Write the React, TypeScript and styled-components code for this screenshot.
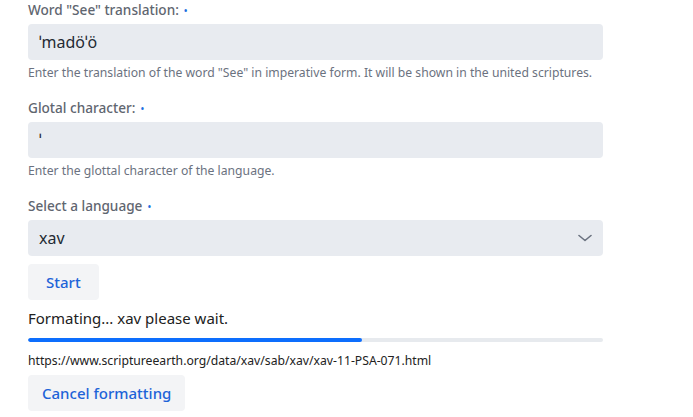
import styled, { createGlobalStyle } from "styled-components";

const GlobalStyle = createGlobalStyle`
  html, body {
    margin: 0;
    padding: 0;
    background: #ffffff;
  }
  body {
    font-family: "Noto Sans", "Open Sans", sans-serif;
    color: #1f2937;
  }
`;

const Page = styled.div`
  width: 575px;
  padding-left: 28px;
  display: flex;
  flex-direction: column;
`;

const Field = styled.div<{ $last?: boolean }>`
  display: flex;
  flex-direction: column;
  margin-bottom: ${(p) => (p.$last ? 8 : 16)}px;
`;

const Label = styled.label`
  height: 20px;
  line-height: 20px;
  font-size: 13.6px;
  font-weight: 500;
  color: #5f6670;
  margin-bottom: 4px;
`;

const Required = styled.span`
  color: #1a6fe0;
  font-size: 10px;
  margin-left: 5px;
`;

const TextInput = styled.div`
  height: 36px;
  box-sizing: border-box;
  background: #e8ebf0;
  border-radius: 4px;
  padding: 0 11px;
  display: flex;
  align-items: center;
  font-size: 16px;
  color: #232a33;
`;

const SelectBox = styled(TextInput)`
  justify-content: space-between;
  padding-right: 11px;
`;

const Help = styled.div`
  margin-top: 4px;
  height: 18px;
  line-height: 18px;
  font-size: 12.2px;
  color: #6b7280;
`;

const Button = styled.button<{ $pad?: number }>`
  align-self: flex-start;
  height: 36px;
  padding: 0 ${(p) => p.$pad ?? 14}px;
  border: none;
  border-radius: 4px;
  background: #f3f4f6;
  color: #1d63d8;
  font-family: inherit;
  font-size: 15px;
  font-weight: 500;
`;

const Status = styled.div`
  margin-top: 6px;
  height: 24px;
  line-height: 24px;
  font-size: 15px;
  color: #212121;
`;

const Track = styled.div`
  margin-top: 8px;
  height: 4px;
  border-radius: 2px;
  background: #e7eaee;
  overflow: hidden;
`;

const Fill = styled.div`
  height: 100%;
  background: #0d6efd;
  border-radius: 2px;
`;

const Url = styled.div`
  margin-top: 10px;
  height: 18px;
  line-height: 18px;
  font-size: 12.2px;
  color: #222;
  margin-bottom: 5px;
`;

const Chevron = () => (
  <svg width="14" height="8" viewBox="0 0 14 8" fill="none">
    <path
      d="M1 1.5 7 6.5 13 1.5"
      stroke="#6b7280"
      strokeWidth="1.6"
      strokeLinecap="round"
      strokeLinejoin="round"
    />
  </svg>
);

export default function App() {
  const progress = 58;
  return (
    <>
      <GlobalStyle />
      <Page>
        <Field>
          <Label>
            Word "See" translation:<Required>•</Required>
          </Label>
          <TextInput>ˈmadöˈö</TextInput>
          <Help>
            Enter the translation of the word "See" in imperative form. It will
            be shown in the united scriptures.
          </Help>
        </Field>
        <Field>
          <Label>
            Glotal character:<Required>•</Required>
          </Label>
          <TextInput>ˈ</TextInput>
          <Help>Enter the glottal character of the language.</Help>
        </Field>
        <Field $last>
          <Label>
            Select a language<Required>•</Required>
          </Label>
          <SelectBox>
            xav
            <Chevron />
          </SelectBox>
        </Field>
        <Button $pad={18}>Start</Button>
        <Status>Formating... xav please wait.</Status>
        <Track>
          <Fill style={{ width: `${progress}%` }} />
        </Track>
        <Url>https://www.scriptureearth.org/data/xav/sab/xav/xav-11-PSA-071.html</Url>
        <Button>Cancel formatting</Button>
      </Page>
    </>
  );
}
